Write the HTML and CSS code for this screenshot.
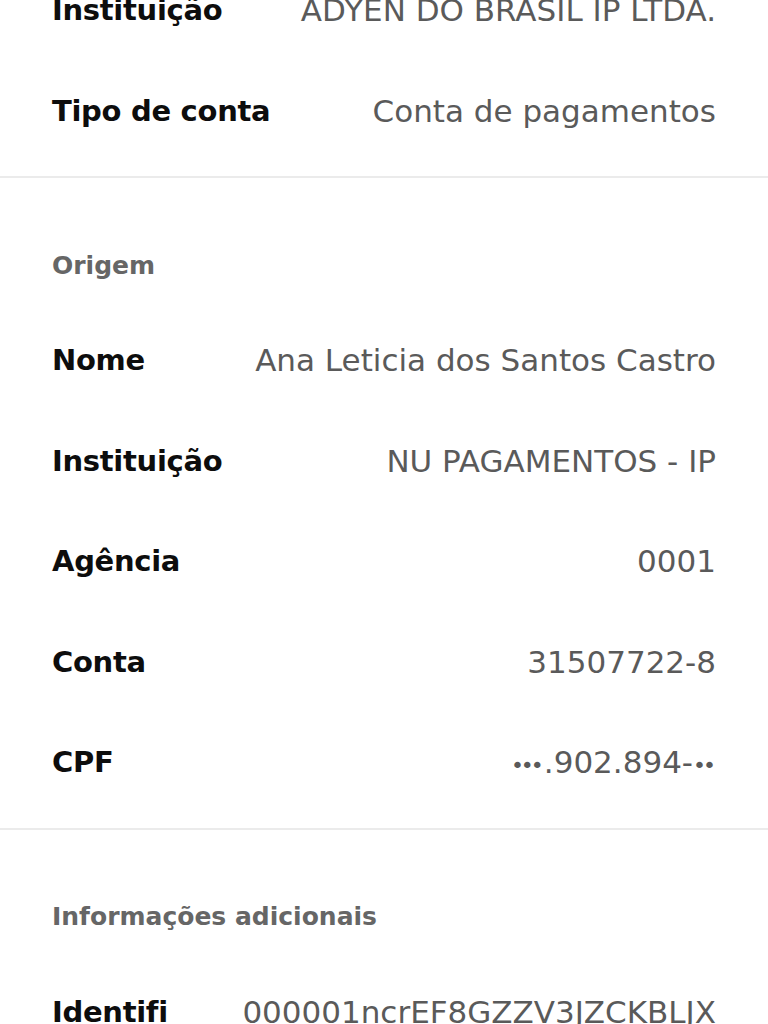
FILE: index.html
```html
<!DOCTYPE html>
<html lang="pt-BR">
<head>
  <meta charset="UTF-8">
  <meta name="viewport" content="width=device-width, initial-scale=1.0">
  <title>Comprovante</title>
  <link rel="stylesheet" href="styles.css">
</head>
<body>
  <div class="receipt">

    <div class="section first">
      <div class="row">
        <span class="label">Instituição</span>
        <span class="value">ADYEN DO BRASIL IP LTDA.</span>
      </div>
      <div class="row">
        <span class="label">Tipo de conta</span>
        <span class="value">Conta de pagamentos</span>
      </div>
    </div>

    <div class="section">
      <div class="section-title">Origem</div>
      <div class="row">
        <span class="label">Nome</span>
        <span class="value">Ana Leticia dos Santos Castro</span>
      </div>
      <div class="row">
        <span class="label">Instituição</span>
        <span class="value">NU PAGAMENTOS - IP</span>
      </div>
      <div class="row">
        <span class="label">Agência</span>
        <span class="value">0001</span>
      </div>
      <div class="row">
        <span class="label">Conta</span>
        <span class="value">31507722-8</span>
      </div>
      <div class="row">
        <span class="label">CPF</span>
        <span class="value"><span class="mask">•••</span>.902.894-<span class="mask">••</span></span>
      </div>
    </div>

    <div class="section">
      <div class="section-title">Informações adicionais</div>
      <div class="row">
        <span class="label">Identifi</span>
        <span class="value">000001ncrEF8GZZV3JZCKBLJX</span>
      </div>
    </div>

  </div>
</body>
</html>
```

FILE: styles.css
```css
body {
  margin: 0;
  background: #ffffff;
  font-family: "DejaVu Sans", Inter, sans-serif;
  color: #111111;
  overflow: hidden;
}
.receipt {
  width: 768px;
}
.section {
  padding: 67px 52px 15px;
  border-top: 2px solid #ebebeb;
}
.section.first {
  padding-top: 0;
  margin-top: -40px;
  border-top: none;
}
.section-title {
  height: 40px;
  display: flex;
  align-items: center;
  margin-bottom: 25px;
  font-size: 25px;
  font-weight: 700;
  color: #666666;
}
.row {
  height: 100.5px;
  display: flex;
  align-items: center;
  justify-content: space-between;
  white-space: nowrap;
}
.label {
  font-size: 29px;
  font-weight: 700;
  letter-spacing: -0.3px;
  color: #0d0d0d;
}
.value {
  font-size: 31px;
  font-weight: 400;
  color: #5a5a5a;
}
.mask {
  font-size: 22px;
  letter-spacing: -3px;
  padding-right: 3px;
}
```
